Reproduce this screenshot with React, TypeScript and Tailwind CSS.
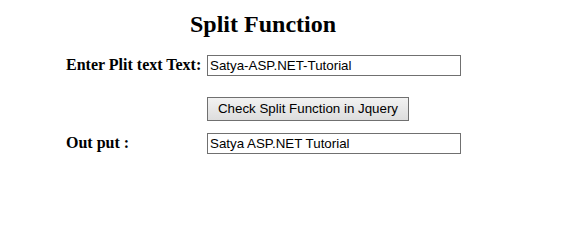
export default function App() {
  return (
    <div className="h-[240px] w-[563px] bg-white font-['Liberation_Serif',serif] text-black">
      <h2 className="pl-[190px] pt-[10px] text-[24px] font-bold leading-[28px]">Split Function</h2>
      <div className="mt-[15px] flex items-center pl-[66px]">
        <span className="w-[141px] text-[16px] font-bold">Enter Plit text Text:</span>
        <input
          readOnly
          value="Satya-ASP.NET-Tutorial"
          className="h-[21px] w-[254px] border border-[#707070] px-[2px] font-['Liberation_Sans',sans-serif] text-[13.33px] outline-none"
        />
      </div>
      <div className="mt-[20px] flex pl-[207px]">
        <button className="h-[24px] w-[202px] border border-[#707070] bg-gradient-to-b from-[#f2f2f2] to-[#dddddd] font-['Liberation_Sans',sans-serif] text-[13.33px]">
          Check Split Function in Jquery
        </button>
      </div>
      <div className="mt-[10px] flex items-center pl-[66px]">
        <span className="w-[141px] text-[16px] font-bold">Out put :</span>
        <input
          readOnly
          value="Satya ASP.NET Tutorial"
          className="h-[21px] w-[254px] border border-[#707070] px-[2px] font-['Liberation_Sans',sans-serif] text-[13.33px] outline-none"
        />
      </div>
    </div>
  );
}
